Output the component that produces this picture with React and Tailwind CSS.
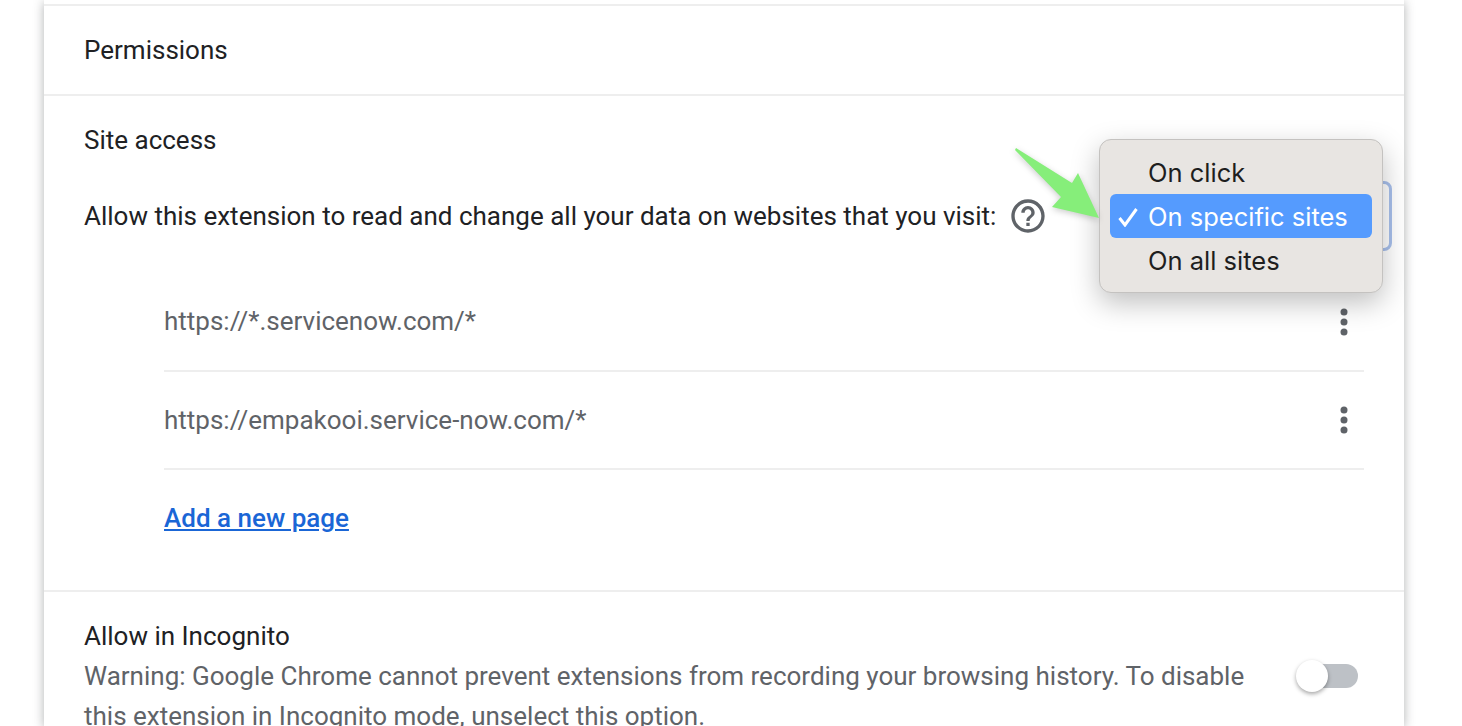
// Chrome extension details page, zoomed in, with the native select menu open
function MoreIcon() {
  return (
    <svg className="h-10 w-10 text-[#5f6368]" viewBox="0 0 40 40" fill="currentColor">
      <circle cx="20" cy="10" r="3.5" />
      <circle cx="20" cy="20" r="3.5" />
      <circle cx="20" cy="30" r="3.5" />
    </svg>
  );
}

function HelpIcon() {
  return (
    <svg className="h-10 w-10 text-[#5f6368]" viewBox="0 0 24 24" fill="currentColor">
      <path d="M11 18h2v-2h-2v2zm1-16C6.48 2 2 6.48 2 12s4.48 10 10 10 10-4.48 10-10S17.52 2 12 2zm0 18c-4.41 0-8-3.59-8-8s3.59-8 8-8 8 3.59 8 8-3.59 8-8 8zm0-14c-2.21 0-4 1.79-4 4h2c0-1.1.9-2 2-2s2 .9 2 2c0 2-3 1.75-3 5h2c0-2.25 3-2.5 3-5 0-2.21-1.79-4-4-4z" />
    </svg>
  );
}

function SiteRow({ url, textClass }) {
  return (
    <div className="flex h-[98px] items-center justify-between border-b-2 border-[#eeeeee]">
      <span className={`text-[#5f6368] ${textClass}`}>{url}</span>
      <div className="flex w-10 items-center justify-center">
        <MoreIcon />
      </div>
    </div>
  );
}

function SelectMenu() {
  return (
    <div className="absolute left-[1099px] top-[139px] z-10 h-[154px] w-[284px] rounded-[12px] border border-[#c4c2c0] bg-[#e8e5e2] px-[10px] py-[10px] font-['Inter',sans-serif] text-[25.5px] leading-[44px] text-[#1e1e1e] shadow-[0_10px_28px_rgba(0,0,0,0.25)]">
      <div className="h-[44px] pl-[38px] pt-[1px]">On click</div>
      <div className="relative h-[44px] rounded-[6px] bg-[#559bfe] pl-[38px] pt-[1px] text-white">
        <svg className="absolute left-[8px] top-[13px] h-[20px] w-[20px]" viewBox="0 0 20 20" fill="none" stroke="currentColor" strokeWidth="3">
          <path d="M1.5 11l5.5 7L18.5 2" />
        </svg>
        On specific sites
      </div>
      <div className="pl-[38px] pt-[1px]">On all sites</div>
    </div>
  );
}

function GreenArrow() {
  return (
    <svg className="absolute left-[1006px] top-[138px] z-20 h-[100px] w-[110px] drop-shadow-[0_2px_3px_rgba(0,0,0,0.2)]" viewBox="1006 138 110 100" fill="#86ee7a">
      <polygon points="1016,148 1072,183 1078,173 1099,218 1052,207 1061,197 1015,150" />
    </svg>
  );
}

export default function App() {
  return (
    <div className="relative h-[726px] overflow-hidden bg-white font-['Roboto',sans-serif] text-[26px] leading-[40px] text-[#202124]">
      <div className="ml-[44px] h-full w-[1360px] bg-white shadow-[0_2px_10px_rgba(60,64,67,0.4)]">
        <div className="h-[6px] border-b-2 border-[#eeeeee]" />

        <div className="flex h-[90px] items-center border-b-2 border-[#eeeeee] px-10">
          <span>Permissions</span>
        </div>

        <div className="h-[496px] border-b-2 border-[#eeeeee]">
          <div className="px-10 pt-6">Site access</div>
          <div className="relative flex items-center gap-3 px-10 pt-[36px]">
            <span>Allow this extension to read and change all your data on websites that you visit:</span>
            <HelpIcon />
            <div className="absolute right-[12px] top-[21px] h-[70px] w-[120px] rounded-[8px] border-[3px] border-[#a8c0ec]" />
          </div>
          <div className="ml-[120px] mr-10 mt-[38px]">
            <SiteRow url="https://*.servicenow.com/*" textClass="-mt-[2px]" />
            <SiteRow url="https://empakooi.service-now.com/*" />
            <div className="pt-[28px]">
              <a href="#" className="font-medium text-[#1a66d6] underline">Add a new page</a>
            </div>
          </div>
        </div>

        <div className="flex justify-between pl-10 pr-[46px] pt-[24px]">
          <div className="w-[1180px]">
            <div>Allow in Incognito</div>
            <div className="text-[#5f6368]">
              Warning: Google Chrome cannot prevent extensions from recording your browsing history. To disable this extension in Incognito mode, unselect this option.
            </div>
          </div>
          <div className="relative mt-[48px] h-6 w-[60px] shrink-0 rounded-full bg-[#bdc1c6]">
            <div className="absolute -left-[2px] -top-[4px] h-8 w-8 rounded-full bg-white shadow-[0_2px_4px_rgba(0,0,0,0.35)]" />
          </div>
        </div>
      </div>

      <SelectMenu />
      <GreenArrow />
    </div>
  );
}
